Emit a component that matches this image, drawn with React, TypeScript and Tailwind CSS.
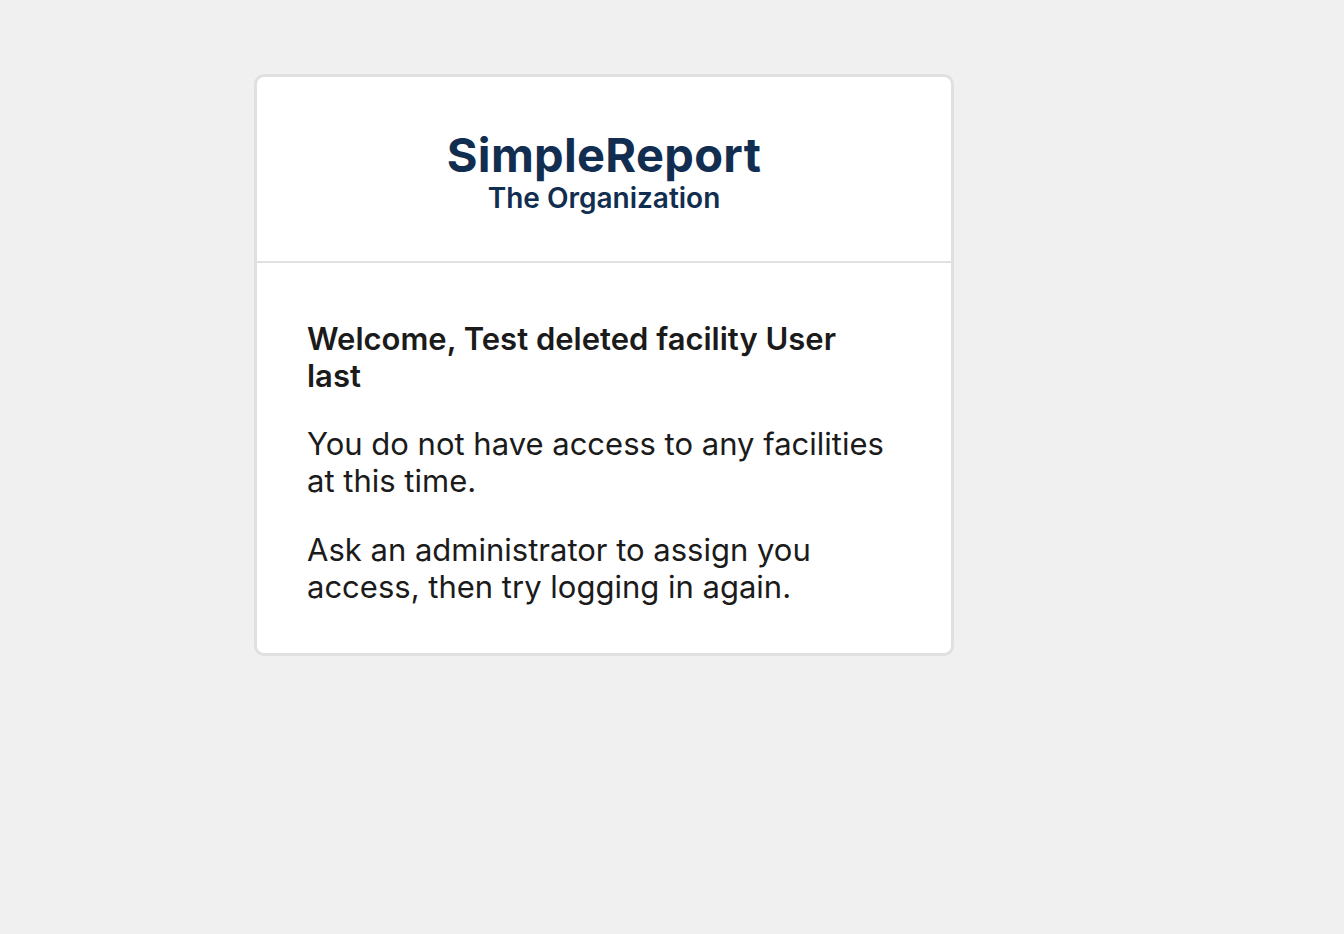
export default function App() {
  return (
    <div className="min-h-[934px] bg-[#f0f0f0] pt-[74px] pl-[254px] font-['Inter',sans-serif]">
      <div className="w-[700px] overflow-hidden rounded-[10px] border-[3px] border-[#e0e0e0] bg-white">
        <header className="flex flex-col items-center border-b-2 border-[#dfe1e2] pt-[53px] pb-[47px] text-[#112e51]">
          <h1 className="text-[47px] leading-[49px] font-bold tracking-[0.3px]">SimpleReport</h1>
          <p className="mt-[3px] text-[28px] leading-[32px] font-semibold">The Organization</p>
        </header>
        <main className="pt-[57px] pr-[63px] pb-[48px] pl-[50px] text-[31px] leading-[37px] text-[#1b1b1b]">
          <h2 className="font-semibold">Welcome, Test deleted facility User last</h2>
          <p className="mt-[31px]">You do not have access to any facilities at this time.</p>
          <p className="mt-[32px]">Ask an administrator to assign you access, then try logging in again.</p>
        </main>
      </div>
    </div>
  )
}
